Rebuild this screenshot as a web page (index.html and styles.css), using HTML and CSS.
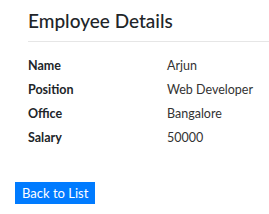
FILE: index.html
```html
<!DOCTYPE html>
<html>
<head>
    <title>Employee Details</title>
    <link rel="stylesheet" href="styles.css">
</head>
<body>
    <div class="container">
        <div class="details">
            <h4>Employee Details</h4>
            <hr>
            <dl class="info">
                <dt>Name</dt>
                <dd>Arjun</dd>
                <dt>Position</dt>
                <dd>Web Developer</dd>
                <dt>Office</dt>
                <dd>Bangalore</dd>
                <dt>Salary</dt>
                <dd>50000</dd>
            </dl>
        </div>
        <a href="#" class="btn">Back to List</a>
    </div>
</body>
</html>
```

FILE: styles.css
```css
body {
    margin: 0;
    font-family: Lato, sans-serif;
    color: #212529;
    background-color: #fff;
}
.container {
    padding-left: 15px;
}
.details {
    padding-left: 13px;
}
h4 {
    margin: 0;
    padding-top: 9px;
    font-size: 19px;
    font-weight: 500;
    line-height: 24px;
}
hr {
    margin: 8px 0 15px 0;
    border: 0;
    border-top: 1px solid #e6e6e6;
}
.info {
    display: grid;
    grid-template-columns: 139px 1fr;
    row-gap: 6px;
    margin: 0;
    font-size: 12.5px;
    line-height: 18px;
}
dt {
    font-weight: bold;
}
dd {
    margin: 0;
    color: #333;
    white-space: nowrap;
}
.btn {
    display: inline-block;
    margin-top: 35px;
    padding: 3px 7px;
    background-color: #007bff;
    color: #fff;
    font-size: 13px;
    line-height: 16px;
    text-decoration: none;
}
```
